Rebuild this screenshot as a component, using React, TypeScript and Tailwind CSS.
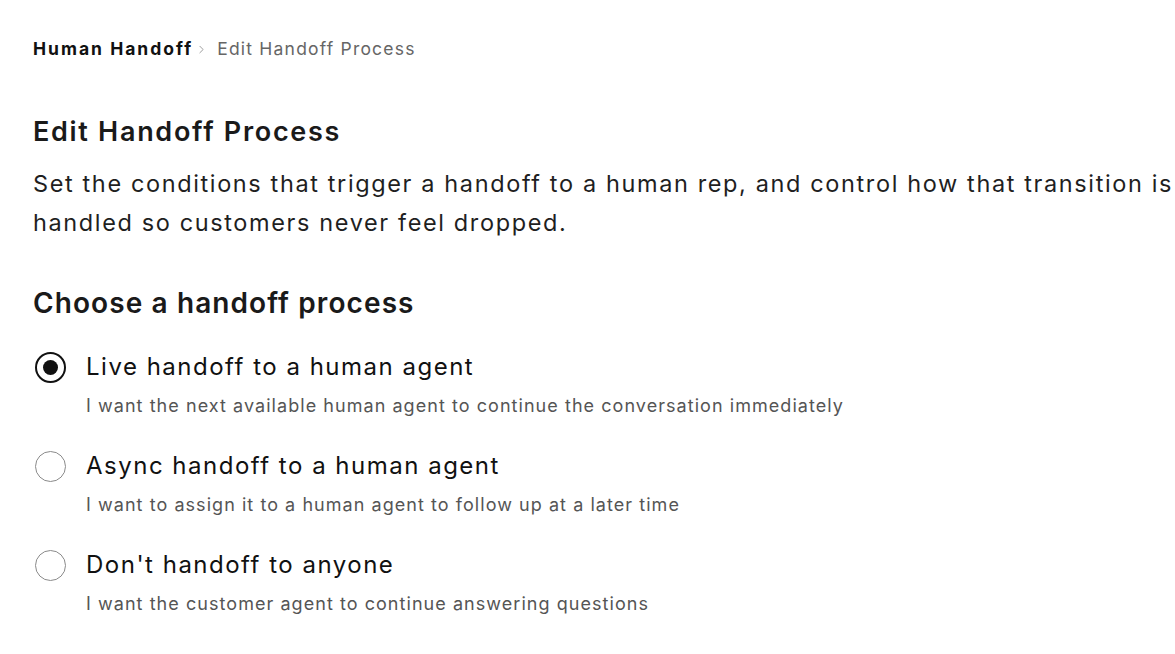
import { useState } from "react";
import { ChevronRight } from "lucide-react";

const options = [
  {
    id: "live",
    title: "Live handoff to a human agent",
    desc: "I want the next available human agent to continue the conversation immediately",
  },
  {
    id: "async",
    title: "Async handoff to a human agent",
    desc: "I want to assign it to a human agent to follow up at a later time",
  },
  {
    id: "none",
    title: "Don't handoff to anyone",
    desc: "I want the customer agent to continue answering questions",
  },
];

const Radio = ({ checked }: { checked: boolean }) =>
  checked ? (
    <span className="flex h-[31px] w-[31px] shrink-0 items-center justify-center rounded-full border-2 border-[#111]">
      <span className="h-[15px] w-[15px] rounded-full bg-[#111]" />
    </span>
  ) : (
    <span className="h-[31px] w-[31px] shrink-0 rounded-full border-[1.5px] border-[#8a8a8a]" />
  );

export default function App() {
  const [selected, setSelected] = useState("live");

  return (
    <div className="min-h-screen bg-white pl-[33px] pt-[36px] font-['Inter',sans-serif] text-[#1a1a1a]">
      <nav className="flex items-center text-[17.5px]">
        <span className="font-bold tracking-[2px] text-[#111]">Human Handoff</span>
        <ChevronRight className="ml-[2px] mr-[9px] h-[13px] w-[13px] text-[#888]" strokeWidth={1.5} />
        <span className="tracking-[1.2px] text-[#666]">Edit Handoff Process</span>
      </nav>

      <h1 className="mt-[52px] text-[27px] font-semibold leading-[36px] tracking-[1.7px]">Edit Handoff Process</h1>
      <p className="mt-[14px] text-[23.5px] leading-[39px] tracking-[1.62px] text-[#1f1f1f]">
        Set the conditions that trigger a handoff to a human rep, and control how that transition is
        handled so customers never feel dropped.
      </p>

      <h2 className="mt-[42px] text-[28px] font-semibold leading-[38px] tracking-[1.1px]">Choose a handoff process</h2>

      <div className="mt-[28px] flex flex-col gap-[26px]">
        {options.map((o) => (
          <label key={o.id} className="flex cursor-pointer flex-col" onClick={() => setSelected(o.id)}>
            <div className="flex items-center gap-[20px] pl-[2px]">
              <Radio checked={selected === o.id} />
              <span className="text-[24px] leading-[34px] tracking-[1.5px] text-[#111]">{o.title}</span>
            </div>
            <span className="mt-[5px] pl-[53px] text-[18px] leading-[34px] tracking-[1.05px] text-[#555]">{o.desc}</span>
          </label>
        ))}
      </div>
    </div>
  );
}
